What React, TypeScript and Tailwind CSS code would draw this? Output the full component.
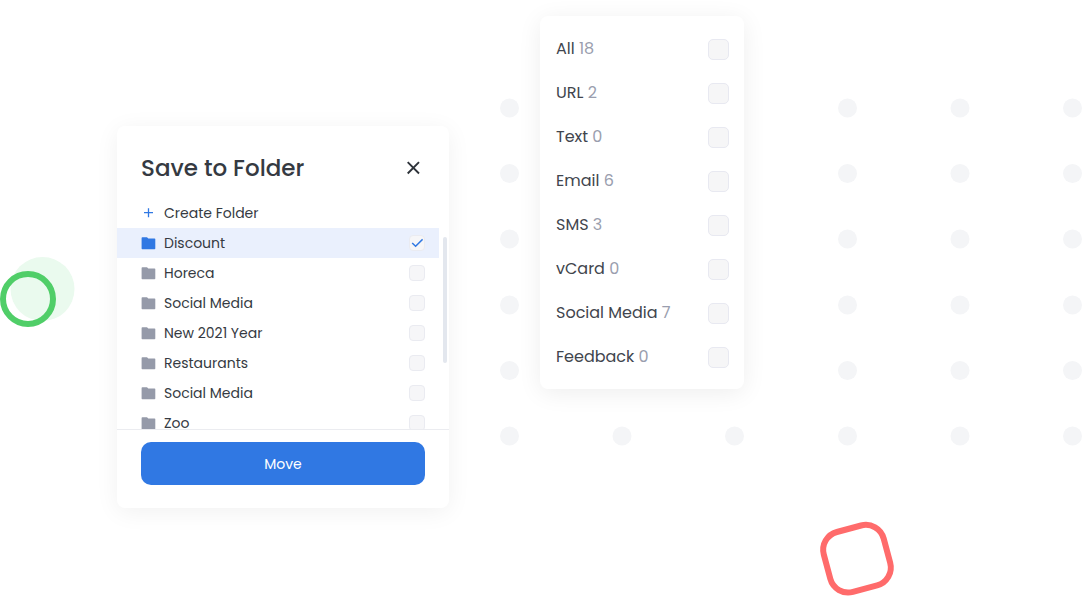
import { useState } from "react";

type Folder = { id: string; name: string };
type Kind = { name: string; count: number };

const folders: Folder[] = [
  { id: "discount", name: "Discount" },
  { id: "horeca", name: "Horeca" },
  { id: "social-1", name: "Social Media" },
  { id: "new-year", name: "New 2021 Year" },
  { id: "restaurants", name: "Restaurants" },
  { id: "social-2", name: "Social Media" },
  { id: "zoo", name: "Zoo" },
];

const kinds: Kind[] = [
  { name: "All", count: 18 },
  { name: "URL", count: 2 },
  { name: "Text", count: 0 },
  { name: "Email", count: 6 },
  { name: "SMS", count: 3 },
  { name: "vCard", count: 0 },
  { name: "Social Media", count: 7 },
  { name: "Feedback", count: 0 },
];

function FolderIcon({ active }: { active: boolean }) {
  return (
    <svg
      viewBox="0 0 15 13"
      aria-hidden="true"
      className={active ? "h-[13px] w-[15px] text-[#3078e3]" : "h-[13px] w-[15px] text-[#959aa9]"}
    >
      <path
        d="M1.300.3H6L7.300 1.400h6.300c.4 0 .7.3.7.7v9.500c0 .4-.3.7-.7.7H1.300c-.4 0-.7-.3-.7-.7V1C.6.600.9.3 1.300.3Z"
        fill="currentColor"
      />
    </svg>
  );
}

function FolderPanel() {
  const [selected, setSelected] = useState("discount");
  return (
    <section className="mt-[126px] w-[332px] shrink-0 rounded-lg bg-white pb-[23px] shadow-[0_4px_24px_rgba(0,0,0,0.06)]">
      <header className="flex items-center justify-between px-6 pt-[26px]">
        <h2 className="text-[23px] leading-8 font-medium text-[#353a42]">Save to Folder</h2>
        <button type="button" aria-label="Close" className="flex size-6 items-center justify-center">
          <svg viewBox="0 0 14 14" className="size-3.5" fill="none" stroke="#2e333a" strokeWidth="1.9" aria-hidden="true">
            <path d="M1.700 1.200l11.300 11.300M13 1.200L1.700 12.500" />
          </svg>
        </button>
      </header>
      <button type="button" className="mt-[13px] flex h-[31px] w-full items-center gap-2 px-6 text-sm text-[#353a42]">
        <svg viewBox="0 0 15 14" className="h-3.5 w-[15px]" stroke="#3078e3" strokeWidth="1.3" aria-hidden="true">
          <path d="M7.500 2.200v9M3 6.700h9" />
        </svg>
        Create Folder
      </button>
      <div className="flex h-[202px] border-b border-[#ebecf0]">
        <ul className="flex-1 overflow-hidden">
          {folders.map((folder) => {
            const active = folder.id === selected;
            return (
              <li key={folder.id}>
                <label
                  className={
                    active
                      ? "flex h-[30px] items-center gap-2 bg-[#eaf0fd] pr-3.5 pl-6 text-sm text-[#353a42]"
                      : "flex h-[30px] items-center gap-2 pr-3.5 pl-6 text-sm text-[#353a42]"
                  }
                >
                  <FolderIcon active={active} />
                  <span className="flex-1">{folder.name}</span>
                  <span className="grid size-4 place-items-center">
                    <input
                      type="checkbox"
                      checked={active}
                      onChange={() => setSelected(folder.id)}
                      className="col-start-1 row-start-1 size-4 appearance-none rounded border border-[#eaebf1] bg-[#f6f6f8]"
                    />
                    {active && (
                      <svg
                        viewBox="0 0 12 10"
                        className="pointer-events-none z-10 col-start-1 row-start-1 h-2.5 w-3"
                        fill="none"
                        stroke="#3078e3"
                        strokeWidth="1.5"
                        aria-hidden="true"
                      >
                        <path d="M1.200 5l3.400 3.200L11.600 1.300" />
                      </svg>
                    )}
                  </span>
                </label>
              </li>
            );
          })}
        </ul>
        <div className="w-2.5 pt-[9px] pl-1">
          <div className="h-[126px] w-1 rounded-full bg-[#e3e7ee]" />
        </div>
      </div>
      <div className="px-6 pt-3">
        <button type="button" className="h-[43px] w-full rounded-[10px] bg-[#3078e3] text-sm text-white">
          Move
        </button>
      </div>
    </section>
  );
}

function KindPanel() {
  return (
    <section className="mt-4 w-[204px] shrink-0 rounded-lg bg-white pt-[11px] pb-2.5 shadow-[0_4px_24px_rgba(0,0,0,0.07)]">
      <ul>
        {kinds.map((kind) => (
          <li key={kind.name}>
            <label className="flex h-11 items-center justify-between pr-[15px] pl-4 text-base text-[#41454d]">
              <span>
                {kind.name} <span className="text-[#9a9eae]">{kind.count}</span>
              </span>
              <input
                type="checkbox"
                className="size-[21px] appearance-none rounded-[5px] border border-[#e8e9f1] bg-[#f6f6f7] checked:bg-[#3078e3]"
              />
            </label>
          </li>
        ))}
      </ul>
    </section>
  );
}

const dotColumns = [509.5, 622, 734.5, 847.5, 960, 1072.5];
const dotRows = [108, 173.5, 239, 305, 370.5, 436];

function Decorations() {
  return (
    <svg className="pointer-events-none absolute top-0 left-0 -z-10" width="1082" height="600" aria-hidden="true">
      <g fill="#f4f5f7">
        {dotRows.flatMap((y) => dotColumns.map((x) => <circle key={`${x}-${y}`} cx={x} cy={y} r="9.5" />))}
      </g>
      <circle cx="42.500" cy="289" r="32" fill="#eafaee" />
      <circle cx="28" cy="299" r="25" fill="none" stroke="#50ce68" strokeWidth="6" />
      <rect
        x="826"
        y="527.700"
        width="62"
        height="62"
        rx="18.500"
        fill="none"
        stroke="#ff6b6b"
        strokeWidth="6"
        transform="rotate(-15 857 558.700)"
      />
    </svg>
  );
}

export default function App() {
  return (
    <main className="relative isolate flex min-h-screen items-start gap-[91px] overflow-hidden bg-white pl-[117px] font-[Poppins,Inter,sans-serif]">
      <Decorations />
      <FolderPanel />
      <KindPanel />
    </main>
  );
}
